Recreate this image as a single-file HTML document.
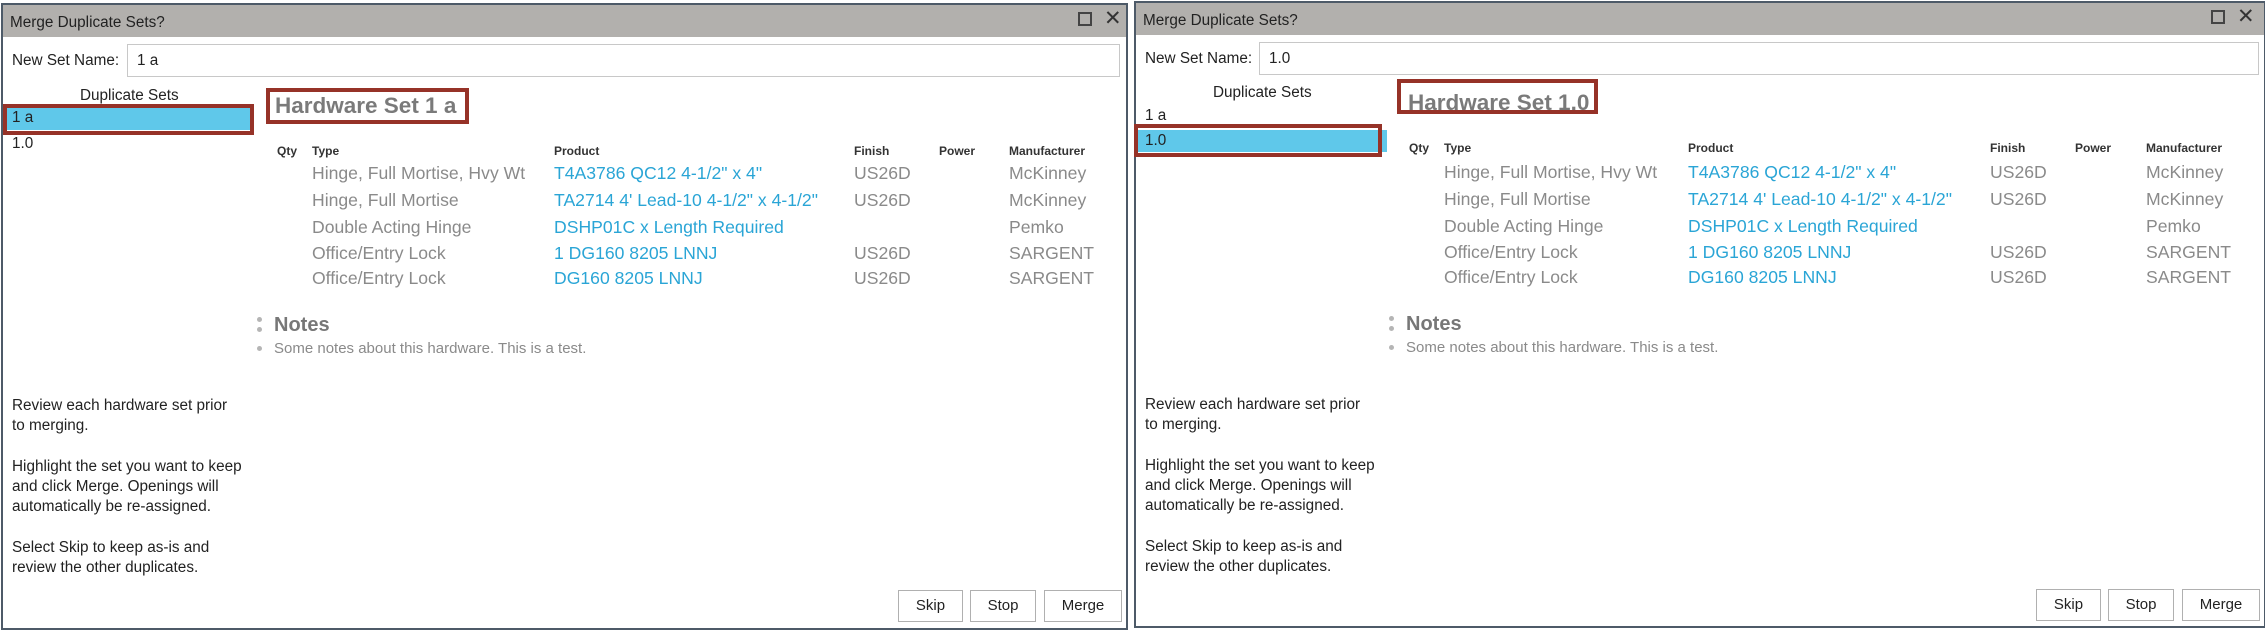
<!DOCTYPE html>
<html><head><meta charset="utf-8"><style>
*{margin:0;padding:0;box-sizing:border-box}
body{width:2265px;height:632px;background:#fff;position:relative;overflow:hidden;font-family:"Liberation Sans",Arial,sans-serif;color:#222}
.dlg{position:absolute;top:0;width:1133px;height:632px}
.a{position:absolute;white-space:nowrap}
.frame{position:absolute;left:1px;top:3px;width:1127px;height:627px;border:2px solid #4d5a68}
.tb{position:absolute;left:3px;top:5px;width:1123px;height:32px;background:#b2b0ad}
.t15{font-size:15.3px;line-height:20px}
.hdr{font-size:12px;font-weight:bold;color:#333;line-height:16px}
.cell{font-size:17.6px;line-height:20px;color:#8a8a8a}
.lnk{color:#2aa5d6}
.red{position:absolute;border:4px solid #963228}
.btn{position:absolute;top:590px;height:32px;border:1px solid #b0b0b0;background:#fff;font-size:15px;line-height:30px;text-align:center;color:#222}
.dot{position:absolute;width:5px;height:5px;border-radius:50%;background:#b5b5b5}
.hw{font-size:22.5px;line-height:26px;font-weight:bold;color:#7a7a7a}
.nt{font-size:15px;line-height:17px;color:#8a8a8a}
</style></head><body>

<!-- LEFT DIALOG -->
<div class="dlg" style="left:0">
<div class="frame"></div>
<div class="tb"></div>
<div class="a t15" style="left:10px;top:13px">Merge Duplicate Sets?</div>
<div class="a" style="left:1078px;top:12px;width:14px;height:14px;border:2px solid #444"></div>
<div class="a" style="left:1104px;top:8px;font-size:21px;line-height:22px;color:#333">✕</div>
<div class="a t15" style="left:12px;top:51px">New Set Name:</div>
<div class="a" style="left:127px;top:44px;width:993px;height:33px;border:1px solid #c8c8c8"></div>
<div class="a t15" style="left:137px;top:51px">1 a</div>
<div class="a t15" style="left:80px;top:86px">Duplicate Sets</div>
<div class="a" style="left:7px;top:108px;width:243px;height:22px;background:#5fc8ea"></div>
<div class="red" style="left:3px;top:104px;width:251px;height:31px"></div>
<div class="a t15" style="left:12px;top:108px">1 a</div>
<div class="a t15" style="left:12px;top:134px">1.0</div>
<div class="a hw" style="left:275px;top:93px">Hardware Set 1 a</div>
<div class="red" style="left:266px;top:88px;width:203px;height:36px"></div>

<div class="a hdr" style="left:277px;top:143px">Qty</div>
<div class="a hdr" style="left:312px;top:143px">Type</div>
<div class="a hdr" style="left:554px;top:143px">Product</div>
<div class="a hdr" style="left:854px;top:143px">Finish</div>
<div class="a hdr" style="left:939px;top:143px">Power</div>
<div class="a hdr" style="left:1009px;top:143px">Manufacturer</div>

<div class="a cell" style="left:312px;top:163px">Hinge, Full Mortise, Hvy Wt</div>
<div class="a cell lnk" style="left:554px;top:163px">T4A3786 QC12 4-1/2" x 4"</div>
<div class="a cell" style="left:854px;top:163px">US26D</div>
<div class="a cell" style="left:1009px;top:163px">McKinney</div>
<div class="a cell" style="left:312px;top:190px">Hinge, Full Mortise</div>
<div class="a cell lnk" style="left:554px;top:190px">TA2714 4' Lead-10 4-1/2" x 4-1/2"</div>
<div class="a cell" style="left:854px;top:190px">US26D</div>
<div class="a cell" style="left:1009px;top:190px">McKinney</div>
<div class="a cell" style="left:312px;top:217px">Double Acting Hinge</div>
<div class="a cell lnk" style="left:554px;top:217px">DSHP01C x Length Required</div>
<div class="a cell" style="left:1009px;top:217px">Pemko</div>
<div class="a cell" style="left:312px;top:243px">Office/Entry Lock</div>
<div class="a cell lnk" style="left:554px;top:243px">1 DG160 8205 LNNJ</div>
<div class="a cell" style="left:854px;top:243px">US26D</div>
<div class="a cell" style="left:1009px;top:243px">SARGENT</div>
<div class="a cell" style="left:312px;top:268px">Office/Entry Lock</div>
<div class="a cell lnk" style="left:554px;top:268px">DG160 8205 LNNJ</div>
<div class="a cell" style="left:854px;top:268px">US26D</div>
<div class="a cell" style="left:1009px;top:268px">SARGENT</div>

<div class="dot" style="left:257px;top:317px"></div>
<div class="dot" style="left:257px;top:327px"></div>
<div class="dot" style="left:257px;top:346px"></div>
<div class="a" style="left:274px;top:313px;font-size:20px;line-height:24px;font-weight:bold;color:#777">Notes</div>
<div class="a nt" style="left:274px;top:340px">Some notes about this hardware. This is a test.</div>

<div class="a t15" style="left:12px;top:396px">Review each hardware set prior</div>
<div class="a t15" style="left:12px;top:416px">to merging.</div>
<div class="a t15" style="left:12px;top:457px">Highlight the set you want to keep</div>
<div class="a t15" style="left:12px;top:477px">and click Merge. Openings will</div>
<div class="a t15" style="left:12px;top:497px">automatically be re-assigned.</div>
<div class="a t15" style="left:12px;top:538px">Select Skip to keep as-is and</div>
<div class="a t15" style="left:12px;top:558px">review the other duplicates.</div>

<div class="btn" style="left:898px;width:65px">Skip</div>
<div class="btn" style="left:970px;width:66px">Stop</div>
<div class="btn" style="left:1044px;width:78px">Merge</div>
</div>

<!-- RIGHT DIALOG -->
<div class="dlg" style="left:1133px;top:-2px">
<div class="frame" style="width:1132px"></div>
<div class="tb" style="width:1128px"></div>
<div class="a t15" style="left:10px;top:13px">Merge Duplicate Sets?</div>
<div class="a" style="left:1078px;top:12px;width:14px;height:14px;border:2px solid #444"></div>
<div class="a" style="left:1104px;top:8px;font-size:21px;line-height:22px;color:#333">✕</div>
<div class="a t15" style="left:12px;top:51px">New Set Name:</div>
<div class="a" style="left:126px;top:44px;width:1000px;height:33px;border:1px solid #c8c8c8"></div>
<div class="a t15" style="left:136px;top:51px">1.0</div>
<div class="a t15" style="left:80px;top:85px">Duplicate Sets</div>
<div class="a t15" style="left:12px;top:108px">1 a</div>
<div class="a" style="left:5px;top:132px;width:249px;height:22px;background:#5fc8ea"></div>
<div class="red" style="left:1px;top:126px;width:248px;height:33px"></div>
<div class="a t15" style="left:12px;top:133px">1.0</div>
<div class="a hw" style="left:275px;top:92px">Hardware Set 1.0</div>
<div class="a" style="left:268px;top:112px;width:195px;height:10px;background:#fff"></div>
<div class="red" style="left:264px;top:81px;width:201px;height:35px"></div>

<div class="a hdr" style="left:276px;top:142px">Qty</div>
<div class="a hdr" style="left:311px;top:142px">Type</div>
<div class="a hdr" style="left:555px;top:142px">Product</div>
<div class="a hdr" style="left:857px;top:142px">Finish</div>
<div class="a hdr" style="left:942px;top:142px">Power</div>
<div class="a hdr" style="left:1013px;top:142px">Manufacturer</div>

<div class="a cell" style="left:311px;top:164px">Hinge, Full Mortise, Hvy Wt</div>
<div class="a cell lnk" style="left:555px;top:164px">T4A3786 QC12 4-1/2" x 4"</div>
<div class="a cell" style="left:857px;top:164px">US26D</div>
<div class="a cell" style="left:1013px;top:164px">McKinney</div>
<div class="a cell" style="left:311px;top:191px">Hinge, Full Mortise</div>
<div class="a cell lnk" style="left:555px;top:191px">TA2714 4' Lead-10 4-1/2" x 4-1/2"</div>
<div class="a cell" style="left:857px;top:191px">US26D</div>
<div class="a cell" style="left:1013px;top:191px">McKinney</div>
<div class="a cell" style="left:311px;top:218px">Double Acting Hinge</div>
<div class="a cell lnk" style="left:555px;top:218px">DSHP01C x Length Required</div>
<div class="a cell" style="left:1013px;top:218px">Pemko</div>
<div class="a cell" style="left:311px;top:244px">Office/Entry Lock</div>
<div class="a cell lnk" style="left:555px;top:244px">1 DG160 8205 LNNJ</div>
<div class="a cell" style="left:857px;top:244px">US26D</div>
<div class="a cell" style="left:1013px;top:244px">SARGENT</div>
<div class="a cell" style="left:311px;top:269px">Office/Entry Lock</div>
<div class="a cell lnk" style="left:555px;top:269px">DG160 8205 LNNJ</div>
<div class="a cell" style="left:857px;top:269px">US26D</div>
<div class="a cell" style="left:1013px;top:269px">SARGENT</div>

<div class="dot" style="left:256px;top:318px"></div>
<div class="dot" style="left:256px;top:328px"></div>
<div class="dot" style="left:256px;top:347px"></div>
<div class="a" style="left:273px;top:314px;font-size:20px;line-height:24px;font-weight:bold;color:#777">Notes</div>
<div class="a nt" style="left:273px;top:341px">Some notes about this hardware. This is a test.</div>

<div class="a t15" style="left:12px;top:397px">Review each hardware set prior</div>
<div class="a t15" style="left:12px;top:417px">to merging.</div>
<div class="a t15" style="left:12px;top:458px">Highlight the set you want to keep</div>
<div class="a t15" style="left:12px;top:478px">and click Merge. Openings will</div>
<div class="a t15" style="left:12px;top:498px">automatically be re-assigned.</div>
<div class="a t15" style="left:12px;top:539px">Select Skip to keep as-is and</div>
<div class="a t15" style="left:12px;top:559px">review the other duplicates.</div>

<div class="btn" style="left:903px;width:65px;top:591px">Skip</div>
<div class="btn" style="left:975px;width:66px;top:591px">Stop</div>
<div class="btn" style="left:1049px;width:78px;top:591px">Merge</div>
</div>

</body></html>
